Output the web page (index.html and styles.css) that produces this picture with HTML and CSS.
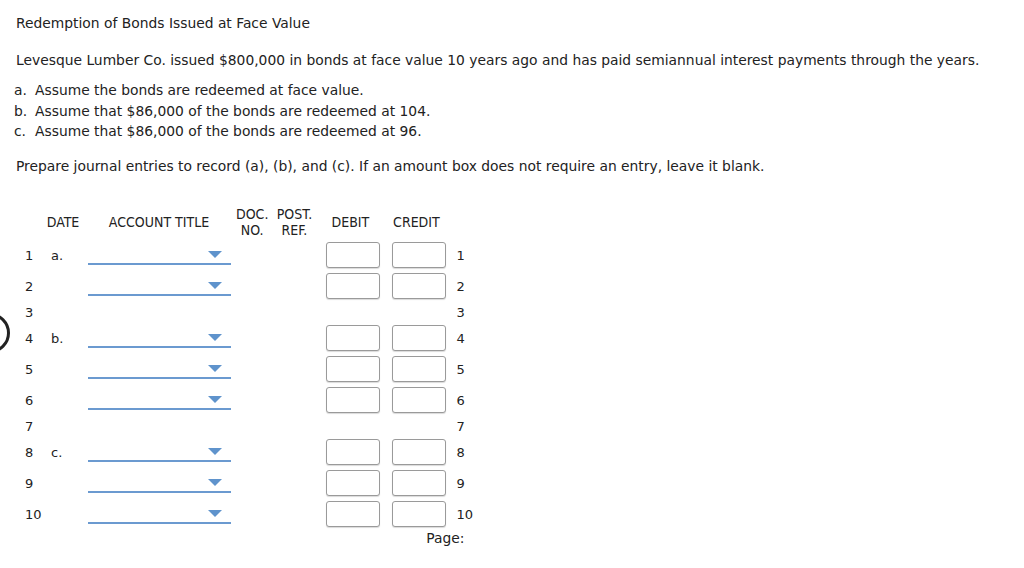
FILE: index.html
```html
<!DOCTYPE html>
<html lang="en">

<head>
  <meta charset="UTF-8">
  <meta name="viewport" content="width=device-width, initial-scale=1.0">
  <title>Redemption of Bonds Issued at Face Value</title>
  <link rel="stylesheet" href="styles.css">
</head>

<body>
  <div class="marker"></div>

  <div class="problem">
    <p class="title">Redemption of Bonds Issued at Face Value</p>
    <p class="intro">Levesque Lumber Co. issued $800,000 in bonds at face value 10 years ago and has paid semiannual interest payments through the years.</p>
    <ol class="parts">
      <li><span class="letter">a.</span>Assume the bonds are redeemed at face value.</li>
      <li><span class="letter">b.</span>Assume that $86,000 of the bonds are redeemed at 104.</li>
      <li><span class="letter">c.</span>Assume that $86,000 of the bonds are redeemed at 96.</li>
    </ol>
    <p class="intro prepare">Prepare journal entries to record (a), (b), and (c). If an amount box does not require an entry, leave it blank.</p>
  </div>

  <table class="journal">
    <colgroup>
      <col class="c-num">
      <col class="c-date">
      <col class="c-acct">
      <col class="c-doc">
      <col class="c-post">
      <col class="c-amt">
      <col class="c-amt">
      <col class="c-end">
    </colgroup>
    <thead>
      <tr>
        <th></th>
        <th>DATE</th>
        <th>ACCOUNT TITLE</th>
        <th>DOC.<br>NO.</th>
        <th>POST.<br>REF.</th>
        <th class="amt-head">DEBIT</th>
        <th class="amt-head">CREDIT</th>
        <th></th>
      </tr>
    </thead>
    <tbody id="rows"></tbody>
    <tfoot>
      <tr>
        <td colspan="8" class="page">Page:</td>
      </tr>
    </tfoot>
  </table>

  <script>
    // 每一行：日期标记，是否有输入框
    const rows = [
      ['a.', true], ['', true], ['', false],
      ['b.', true], ['', true], ['', true], ['', false],
      ['c.', true], ['', true], ['', true]
    ]
    const tbody = document.getElementById('rows')
    rows.forEach(([date, entry], i) => {
      const tr = document.createElement('tr')
      tr.className = entry ? 'entry' : 'blank'
      const n = i + 1
      if (entry) {
        tr.innerHTML =
          `<td class="num">${n}</td>` +
          `<td class="date">${date}</td>` +
          `<td class="acct"><div class="select"><span class="arrow"></span></div></td>` +
          `<td></td><td></td>` +
          `<td class="amt"><input type="text"></td>` +
          `<td class="amt"><input type="text"></td>` +
          `<td class="end">${n}</td>`
      } else {
        tr.innerHTML =
          `<td class="num">${n}</td><td class="date">${date}</td>` +
          `<td></td><td></td><td></td><td></td><td></td>` +
          `<td class="end">${n}</td>`
      }
      tbody.appendChild(tr)
    })
  </script>
</body>

</html>
```

FILE: styles.css
```css
body {
  margin: 0;
  padding: 0 16px;
  font-family: "DejaVu Sans", Verdana, sans-serif;
  font-size: 13.85px;
  color: #222;
  background: #fff;
}

/* 左侧的圆圈 */
.marker {
  position: absolute;
  left: -30px;
  top: 313px;
  width: 40px;
  height: 40px;
  box-sizing: border-box;
  border: 3px solid #222;
  border-radius: 50%;
}

.problem p {
  margin: 0;
  line-height: 16px;
}

.problem .title {
  padding-top: 15px;
}

.problem .intro {
  margin-top: 21px;
}

.problem .prepare {
  margin-top: 16px;
}

.parts {
  list-style: none;
  margin: 12px 0 0;
  padding: 0;
}

.parts li {
  line-height: 20.5px;
}

.parts .letter {
  display: inline-block;
  width: 21px;
  margin-left: -2px;
}

/* 分录表 */
.journal {
  margin-top: 30px;
  border-collapse: collapse;
  table-layout: fixed;
  font-size: 13px;
}

.journal .c-num { width: 28px; }
.journal .c-date { width: 38px; }
.journal .c-acct { width: 154px; }
.journal .c-doc { width: 32px; }
.journal .c-post { width: 52px; }
.journal .c-amt { width: 66px; }
.journal .c-end { width: 40px; }

.journal th {
  font-family: "DejaVu Sans Condensed", "DejaVu Sans", sans-serif;
  font-weight: normal;
  font-size: 14px;
  line-height: 16px;
  height: 36px;
  padding: 0;
  text-align: center;
  vertical-align: middle;
  color: #222;
  white-space: nowrap;
}

.journal th.amt-head {
  padding-right: 6px;
}

.journal td {
  padding: 0;
  vertical-align: middle;
}

.journal tr.entry td {
  height: 31px;
}

.journal tr.blank td {
  height: 20px;
  vertical-align: top;
  line-height: 21px;
}

.journal .num {
  padding-left: 9px;
}

.journal .date {
  padding-left: 7px;
}

.journal .end {
  padding-left: 4px;
}

.journal td.acct {
  vertical-align: top;
}

.select {
  position: relative;
  margin: 0 5px 0 6px;
  height: 23px;
  border-bottom: 2px solid #6b9ad0;
}

.select .arrow {
  position: absolute;
  right: 9px;
  top: 11px;
  width: 0;
  height: 0;
  border-left: 7px solid transparent;
  border-right: 7px solid transparent;
  border-top: 7px solid #5f93cc;
}

.amt input {
  display: block;
  box-sizing: border-box;
  width: 54px;
  height: 26px;
  margin: 0 auto;
  border: 1px solid #9a9a9a;
  border-radius: 3px;
  box-shadow: 0 1px 1px rgba(0, 0, 0, 0.15);
  background: #fff;
}

.journal .page {
  text-align: right;
  padding-right: 28px;
  padding-top: 0;
  line-height: 16px;
  font-size: 13.85px;
}
```
